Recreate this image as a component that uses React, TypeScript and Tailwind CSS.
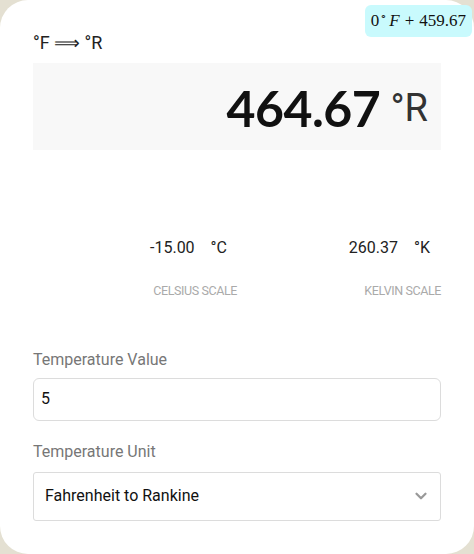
import { ChevronDown } from "lucide-react";

export default function App() {
  return (
    <div className="w-[474px] h-[554px] bg-[#e4e0d2] overflow-hidden">
      <div className="relative w-full h-full bg-white rounded-[28px] px-[33px] font-['Roboto',sans-serif] text-[#222]">
        {/* Formula badge */}
        <div className="absolute top-[5px] right-[2px] bg-[#c9fafd] rounded-md px-[6px] h-[32px] flex items-center font-['Liberation_Serif',serif] text-[17px] text-[#111]">
          <span>0</span>
          <sup className="text-[11px] -top-[5px] ml-[1px] mr-[2px]">∘</sup>
          <span className="italic">F</span>
          <span className="mx-[5px]">+</span>
          <span>459.67</span>
        </div>

        <div className="pt-[31px] text-[18px] leading-[24px]">°F ⟹ °R</div>

        {/* Result */}
        <div className="mt-[8px] h-[87px] bg-[#f8f8f8] flex items-center justify-end pr-[13px] pt-[2px]">
          <span className="font-['Lato',sans-serif] font-bold text-[50px] leading-none tracking-[-0.5px] text-[#111]">
            464.67
          </span>
          <span className="ml-[10px] text-[38px] leading-none text-[#333]">°R</span>
        </div>

        {/* Other scales */}
        <div className="mt-[86px] grid grid-cols-2">
          <div className="flex flex-col items-end">
            <div className="pr-[10px] text-[16px] leading-[24px]">
              -15.00<span className="ml-[16px]">°C</span>
            </div>
            <div className="mt-[22px] text-[12.5px] text-[#aaa] tracking-[-0.4px]">CELSIUS SCALE</div>
          </div>
          <div className="flex flex-col items-end">
            <div className="pr-[11px] text-[16px] leading-[24px]">
              260.37<span className="ml-[16px]">°K</span>
            </div>
            <div className="mt-[22px] text-[12.5px] text-[#aaa] tracking-[-0.4px]">KELVIN SCALE</div>
          </div>
        </div>

        {/* Form */}
        <div className="mt-[49px] text-[16px] text-[#777] leading-[20px]">Temperature Value</div>
        <div className="mt-[8px] h-[43px] border border-[#dcdcdc] rounded-[6px] flex items-center px-[7px] text-[16px] text-[#111]">
          5
        </div>
        <div className="mt-[21px] text-[16px] text-[#777] leading-[20px]">Temperature Unit</div>
        <div className="mt-[10px] h-[49px] border border-[#dcdcdc] rounded-[3px] flex items-center justify-between pl-[11px] pr-[10px] text-[16px] text-[#111]">
          <span>Fahrenheit to Rankine</span>
          <ChevronDown className="w-[18px] h-[18px] text-[#999]" strokeWidth={3} />
        </div>
      </div>
    </div>
  );
}
